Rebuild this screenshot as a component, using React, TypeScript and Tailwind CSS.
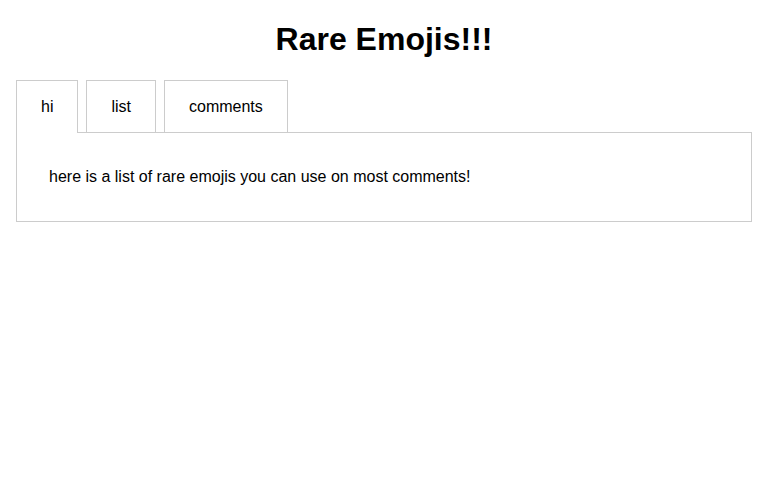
import React, { useState } from "react";

export default function App() {
  const [active, setActive] = useState(0);
  const tabs = ["hi", "list", "comments"];
  return (
    <div className="min-h-[480px] bg-white px-4 text-black" style={{ fontFamily: '"Liberation Sans", Arial, sans-serif' }}>
      <h1 className="pt-[21px] mb-[23px] text-center text-[32px] font-bold leading-[36px]">Rare Emojis!!!</h1>
      <div className="flex items-start gap-2">
        {tabs.map((t, i) => (
          <button
            key={t}
            onClick={() => setActive(i)}
            className={
              i === active
                ? "relative z-10 -mb-px h-[53px] border-x border-t border-[#cccccc] bg-white px-6 text-[16px] leading-[18px] text-black"
                : "h-[52px] border-x border-t border-[#cccccc] bg-white px-6 text-[16px] leading-[18px] text-black"
            }
          >
            {t}
          </button>
        ))}
      </div>
      <div className="border border-[#cccccc] p-8 text-[16px] leading-[24px]">
        here is a list of rare emojis you can use on most comments!
      </div>
    </div>
  );
}
